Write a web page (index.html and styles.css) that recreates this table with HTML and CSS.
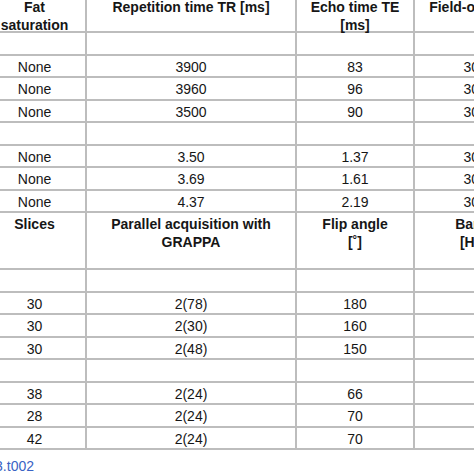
FILE: index.html
```html
<!DOCTYPE html>
<html>
<head>
<meta charset="utf-8">
<link rel="stylesheet" href="styles.css">
</head>
<body>
<div class="page">
  <div class="tbl">
    <div class="row head head-top">
      <div class="cell">Fat<br>saturation</div>
      <div class="cell">Repetition time TR [ms]</div>
      <div class="cell">Echo time TE<br>[ms]</div>
      <div class="cell last">Field-of-view [mm]</div>
    </div>
    <div class="row"><div class="cell"></div><div class="cell"></div><div class="cell"></div><div class="cell last"></div></div>
    <div class="row"><div class="cell">None</div><div class="cell">3900</div><div class="cell">83</div><div class="cell last">300×300</div></div>
    <div class="row"><div class="cell">None</div><div class="cell">3960</div><div class="cell">96</div><div class="cell last">300×300</div></div>
    <div class="row"><div class="cell">None</div><div class="cell">3500</div><div class="cell">90</div><div class="cell last">300×300</div></div>
    <div class="row"><div class="cell"></div><div class="cell"></div><div class="cell"></div><div class="cell last"></div></div>
    <div class="row"><div class="cell">None</div><div class="cell">3.50</div><div class="cell">1.37</div><div class="cell last">300×300</div></div>
    <div class="row"><div class="cell">None</div><div class="cell">3.69</div><div class="cell">1.61</div><div class="cell last">300×300</div></div>
    <div class="row"><div class="cell">None</div><div class="cell">4.37</div><div class="cell">2.19</div><div class="cell last">300×300</div></div>
    <div class="row head head-mid">
      <div class="cell">Slices</div>
      <div class="cell">Parallel acquisition with<br>GRAPPA</div>
      <div class="cell">Flip angle<br>[˚]</div>
      <div class="cell last">Bandwidth<br>[Hz/pixel]</div>
    </div>
    <div class="row"><div class="cell"></div><div class="cell"></div><div class="cell"></div><div class="cell last"></div></div>
    <div class="row"><div class="cell">30</div><div class="cell">2(78)</div><div class="cell">180</div><div class="cell last">260</div></div>
    <div class="row"><div class="cell">30</div><div class="cell">2(30)</div><div class="cell">160</div><div class="cell last">260</div></div>
    <div class="row"><div class="cell">30</div><div class="cell">2(48)</div><div class="cell">150</div><div class="cell last">260</div></div>
    <div class="row"><div class="cell"></div><div class="cell"></div><div class="cell"></div><div class="cell last"></div></div>
    <div class="row"><div class="cell">38</div><div class="cell">2(24)</div><div class="cell">66</div><div class="cell last">400</div></div>
    <div class="row"><div class="cell">28</div><div class="cell">2(24)</div><div class="cell">70</div><div class="cell last">400</div></div>
    <div class="row"><div class="cell">42</div><div class="cell">2(24)</div><div class="cell">70</div><div class="cell last">400</div></div>
  </div>
  <div class="cap"><span class="link">https://doi.org/10.1371/journal.pone.0179753.t002</span></div>
</div>
</body>
</html>
```

FILE: styles.css
```css
html, body {
  margin: 0;
  padding: 0;
  background: #ffffff;
}
.page {
  width: 474px;
  height: 474px;
  overflow: hidden;
  font-family: "Liberation Sans", Arial, sans-serif;
  color: #161616;
  font-size: 14px;
}
.tbl {
  margin-top: -4px;
  margin-left: -16px;
  width: 600px;
}
.row {
  display: grid;
  grid-template-columns: 103px 210px 118px 152px;
  height: 22.5px;
  box-sizing: border-box;
  border-bottom: 2px solid #bdbdbd;
}
.cell {
  box-sizing: border-box;
  border-right: 2px solid #bdbdbd;
  text-align: center;
  white-space: nowrap;
  line-height: 17px;
  padding-top: 3px;
}
.cell.last {
  border-right: none;
}
.head {
  font-weight: bold;
}
.head .cell {
  line-height: 17.5px;
  padding-top: 3px;
}
.head-top {
  height: 37px;
}
.head-mid {
  height: 57px;
}
.cap {
  display: flex;
  justify-content: flex-end;
  width: 34px;
  margin-top: 8px;
  white-space: nowrap;
  line-height: 17px;
}
.link {
  color: #3a63c4;
  font-size: 14px;
  flex: none;
}
```
